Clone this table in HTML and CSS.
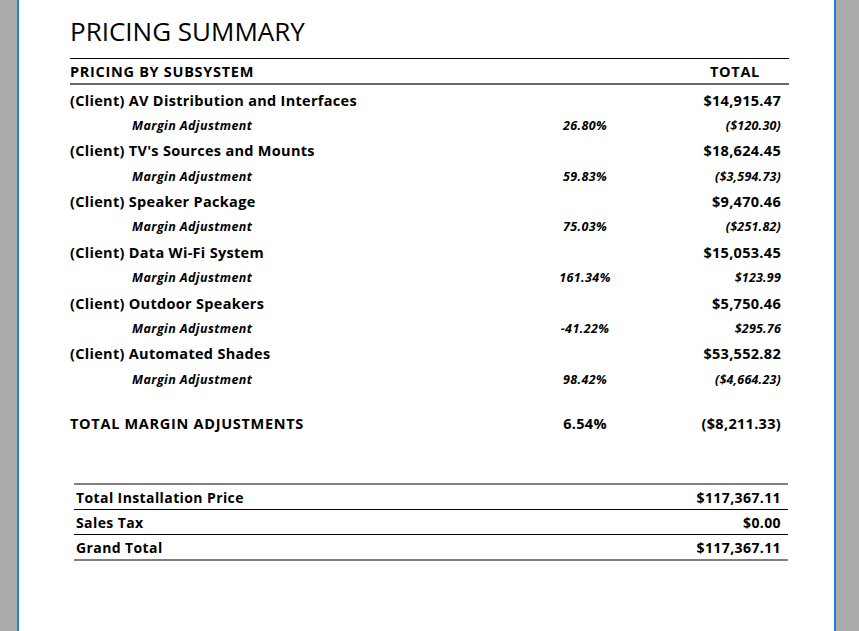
FILE: index.html
```html
<!DOCTYPE html>
<html>
<head>
<meta charset="utf-8">
<link rel="stylesheet" href="styles.css">
</head>
<body>
<div class="page">
  <div class="content">
    <h1 class="title">PRICING SUMMARY</h1>
    <div class="head">
      <div class="head-label">PRICING BY SUBSYSTEM</div>
      <div class="head-total">TOTAL</div>
    </div>
    <div class="rows">
      <div class="row sub"><div class="c1">(Client) AV Distribution and Interfaces</div><div class="c2"></div><div class="c3">$14,915.47</div></div>
      <div class="row adj"><div class="c1">Margin Adjustment</div><div class="c2">26.80%</div><div class="c3">($120.30)</div></div>
      <div class="row sub"><div class="c1">(Client) TV's Sources and Mounts</div><div class="c2"></div><div class="c3">$18,624.45</div></div>
      <div class="row adj"><div class="c1">Margin Adjustment</div><div class="c2">59.83%</div><div class="c3">($3,594.73)</div></div>
      <div class="row sub"><div class="c1">(Client) Speaker Package</div><div class="c2"></div><div class="c3">$9,470.46</div></div>
      <div class="row adj"><div class="c1">Margin Adjustment</div><div class="c2">75.03%</div><div class="c3">($251.82)</div></div>
      <div class="row sub"><div class="c1">(Client) Data Wi-Fi System</div><div class="c2"></div><div class="c3">$15,053.45</div></div>
      <div class="row adj"><div class="c1">Margin Adjustment</div><div class="c2">161.34%</div><div class="c3">$123.99</div></div>
      <div class="row sub"><div class="c1">(Client) Outdoor Speakers</div><div class="c2"></div><div class="c3">$5,750.46</div></div>
      <div class="row adj"><div class="c1">Margin Adjustment</div><div class="c2">-41.22%</div><div class="c3">$295.76</div></div>
      <div class="row sub"><div class="c1">(Client) Automated Shades</div><div class="c2"></div><div class="c3">$53,552.82</div></div>
      <div class="row adj"><div class="c1">Margin Adjustment</div><div class="c2">98.42%</div><div class="c3">($4,664.23)</div></div>
      <div class="row total"><div class="c1">TOTAL MARGIN ADJUSTMENTS</div><div class="c2">6.54%</div><div class="c3">($8,211.33)</div></div>
    </div>
    <div class="summary">
      <div class="srow"><div>Total Installation Price</div><div>$117,367.11</div></div>
      <div class="srow"><div>Sales Tax</div><div>$0.00</div></div>
      <div class="srow"><div>Grand Total</div><div>$117,367.11</div></div>
    </div>
  </div>
</div>
</body>
</html>
```

FILE: styles.css
```css
html, body {
  margin: 0;
  padding: 0;
  background: #ababab;
  height: 631px;
  overflow: hidden;
}
body {
  font-family: "Open Sans", "Noto Sans", sans-serif;
  color: #000;
}
.page {
  margin-left: 17px;
  width: 815px;
  height: 631px;
  background: #fff;
  border-left: 2px solid #1f7fd6;
  border-right: 2px solid #1f7fd6;
}
.content {
  margin-left: 51px;
  width: 719px;
  padding-top: 14px;
}
.title {
  margin: 0;
  font-size: 26px;
  font-weight: 400;
  line-height: 34px;
  height: 44px;
}
.head {
  display: flex;
  justify-content: space-between;
  align-items: center;
  height: 24px;
  border-top: 1px solid #000;
  border-bottom: 2px solid #6a6a6a;
  font-size: 14.5px;
  font-weight: 700;
  letter-spacing: 0.7px;
}
.head-total {
  padding-right: 29px;
}
.rows {
  padding-top: 3px;
}
.row {
  display: grid;
  grid-template-columns: 450px 130px 131px;
  align-items: center;
}
.row .c2 { text-align: center; }
.row .c3 { text-align: right; }
.sub {
  height: 24px;
  font-size: 14.5px;
  font-weight: 700;
  letter-spacing: 0.3px;
}
.adj {
  height: 26.8px;
  font-size: 12.5px;
  font-weight: 700;
  font-style: italic;
}
.adj .c1 {
  padding-left: 62px;
  letter-spacing: 0.4px;
}
.adj .c2 { letter-spacing: 0.4px; }
.adj .c3 { letter-spacing: 0.2px; }
.total {
  margin-top: 18.5px;
  height: 24px;
  font-size: 14.5px;
  font-weight: 700;
}
.total .c1 { letter-spacing: 0.7px; }
.total .c2 { letter-spacing: 0.3px; }
.total .c3 { letter-spacing: 0.3px; }
.summary {
  margin-top: 48px;
  margin-left: 4px;
  width: 714px;
  border-top: 2px solid #808080;
  border-bottom: 2px solid #808080;
  font-size: 14px;
  font-weight: 700;
  letter-spacing: 0.4px;
}
.srow {
  display: flex;
  justify-content: space-between;
  align-items: center;
  height: 24px;
  padding: 0 7px 0 2px;
}
.srow + .srow {
  border-top: 1px solid #000;
}
```
